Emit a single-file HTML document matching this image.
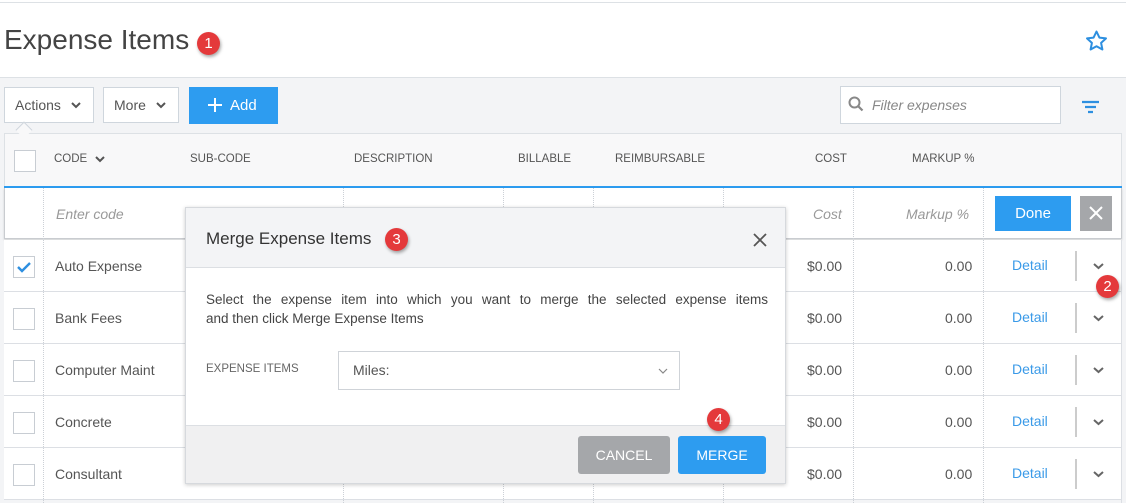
<!DOCTYPE html>
<html><head><style>
*{box-sizing:border-box;margin:0;padding:0}
body{width:1126px;height:503px;overflow:hidden;background:#fff;font-family:"Liberation Sans",sans-serif;color:#555;position:relative}
.a{position:absolute}
.badge{position:absolute;width:23px;height:23px;border-radius:50%;background:#e4393b;color:#fff;font-size:15px;text-align:center;line-height:23px;box-shadow:1px 2px 3px rgba(0,0,0,.35)}
.btn{position:absolute;border:1px solid #cfd6dd;background:#fff;font-size:14px;color:#555;padding-left:10px;line-height:34px}
.th{position:absolute;top:153px;font-size:11.5px;color:#555}
.row{position:absolute;left:4px;width:1118px;height:52px;border-bottom:1px solid #dcdfe4;background:#fff}
.cb{position:absolute;left:9px;width:22px;height:22px;border:1px solid #c8cdd3;background:#fff}
.vd{position:absolute;top:188px;height:315px;border-left:1px dotted #ccd0d6}
.txt{position:absolute;font-size:14px;color:#555}
.det{position:absolute;left:1012px;font-size:14px;color:#3a9ae8}
.chev{position:absolute;left:1093px}
</style></head><body>
<div class="a" style="left:0;top:2px;width:1126px;height:1px;background:#dde1e5"></div>
<div class="a" style="left:4px;top:24px;font-size:28px;color:#444">Expense Items</div>
<div class="badge" style="left:197px;top:32px">1</div>
<svg class="a" style="left:1084px;top:29px" width="25" height="24" viewBox="0 0 24 24"><path d="M12 2.5l2.9 6.1 6.6.8-4.9 4.5 1.3 6.6L12 17.2l-5.9 3.3 1.3-6.6-4.9-4.5 6.6-.8z" fill="none" stroke="#2d8fe0" stroke-width="2" stroke-linejoin="round"/></svg>
<div class="a" style="left:0;top:77px;width:1126px;height:426px;background:#f3f4f6;border-top:1px solid #dde1e5"></div>
<div class="btn" style="left:4px;top:87px;width:90px;height:36px">Actions</div>
<svg class="a" style="left:71px;top:102px" width="10" height="7"><path d="M1 1l4 4 4-4" stroke="#555" stroke-width="2" fill="none"/></svg>
<div class="btn" style="left:103px;top:87px;width:76px;height:36px">More</div>
<svg class="a" style="left:156px;top:102px" width="10" height="7"><path d="M1 1l4 4 4-4" stroke="#555" stroke-width="2" fill="none"/></svg>
<div class="a" style="left:189px;top:87px;width:89px;height:37px;background:#2d9cf0;color:#fff;font-size:15px;line-height:37px;padding-left:41px">Add</div>
<svg class="a" style="left:207px;top:97px" width="16" height="16"><path d="M8 1v14M1 8h14" stroke="#fff" stroke-width="2"/></svg>
<div class="a" style="left:840px;top:86px;width:221px;height:38px;background:#fff;border:1px solid #cfd6dd;font-size:14px;font-style:italic;color:#888;line-height:36px;padding-left:31px">Filter expenses</div>
<svg class="a" style="left:848px;top:96px" width="16" height="16"><circle cx="6.5" cy="6.5" r="5" stroke="#888" stroke-width="2" fill="none"/><path d="M10 10l4.5 4.5" stroke="#888" stroke-width="2.2"/></svg>
<svg class="a" style="left:1082px;top:100px" width="17" height="14"><path d="M0 2h17M3 7h11M6 12h5" stroke="#2d8fe0" stroke-width="2.2"/></svg>
<div class="a" style="left:4px;top:133px;width:1118px;height:54px;background:#f8f8f9;border:1px solid #dde1e5"></div>
<div class="a" style="left:18px;top:124px;width:12px;height:12px;background:#f8f8f9;border-left:1px solid #cfd6dd;border-top:1px solid #cfd6dd;transform:rotate(45deg)"></div>
<div class="cb" style="left:14px;top:150px"></div>
<div class="th" style="left:54px">CODE</div>
<svg class="a" style="left:95px;top:156px" width="10" height="7"><path d="M1 1l4 4 4-4" stroke="#555" stroke-width="2" fill="none"/></svg>
<div class="th" style="left:190px">SUB-CODE</div>
<div class="th" style="left:354px">DESCRIPTION</div>
<div class="th" style="left:518px">BILLABLE</div>
<div class="th" style="left:615px">REIMBURSABLE</div>
<div class="th" style="left:815px">COST</div>
<div class="th" style="left:912px">MARKUP %</div>
<div class="a" style="left:4px;top:186px;width:1118px;height:2px;background:#2d9cf0"></div>
<div class="a" style="left:4px;top:188px;width:1118px;height:51px;background:#fff;border:1px solid #c9ccd0;border-top:none;box-shadow:0 1px 2px rgba(0,0,0,.15)"></div>
<div class="a" style="left:56px;top:206px;font-size:14px;font-style:italic;color:#999">Enter code</div>
<div class="a" style="left:813px;top:206px;font-size:14px;font-style:italic;color:#999">Cost</div>
<div class="a" style="left:906px;top:206px;font-size:14px;font-style:italic;color:#999">Markup %</div>
<div class="a" style="left:995px;top:196px;width:76px;height:35px;background:#2d9cf0;color:#fff;font-size:15px;text-align:center;line-height:35px">Done</div>
<div class="a" style="left:1080px;top:196px;width:32px;height:35px;background:#a5a7aa"></div>
<svg class="a" style="left:1088px;top:205px" width="16" height="16"><path d="M2 2l12 12M14 2L2 14" stroke="#fff" stroke-width="2"/></svg>

<div class="row" style="top:240px"></div>
<div class="row" style="top:292px"></div>
<div class="row" style="top:344px"></div>
<div class="row" style="top:396px"></div>
<div class="row" style="top:448px"></div>
<div class="vd" style="left:43px"></div><div class="vd" style="left:343px"></div><div class="vd" style="left:503px"></div><div class="vd" style="left:593px"></div><div class="vd" style="left:723px"></div><div class="vd" style="left:853px"></div><div class="vd" style="left:983px"></div>
<div class="a" style="left:1121px;top:240px;height:263px;border-left:1px solid #dcdfe4"></div>

<div class="cb" style="left:13px;top:256px"></div>
<svg class="a" style="left:17px;top:261px" width="14" height="12"><path d="M1 6l4 4 8-8" stroke="#2d8fe0" stroke-width="2.4" fill="none"/></svg>
<div class="cb" style="left:13px;top:308px"></div>
<div class="cb" style="left:13px;top:360px"></div>
<div class="cb" style="left:13px;top:412px"></div>
<div class="cb" style="left:13px;top:464px"></div>
<div class="txt" style="left:55px;top:258px">Auto Expense</div>
<div class="txt" style="left:55px;top:310px">Bank Fees</div>
<div class="txt" style="left:55px;top:362px">Computer Maint</div>
<div class="txt" style="left:55px;top:414px">Concrete</div>
<div class="txt" style="left:55px;top:466px">Consultant</div>

<div class="txt" style="left:807px;top:258px">$0.00</div><div class="txt" style="left:945px;top:258px">0.00</div><div class="det" style="top:257px">Detail</div>
<div class="txt" style="left:807px;top:310px">$0.00</div><div class="txt" style="left:945px;top:310px">0.00</div><div class="det" style="top:309px">Detail</div>
<div class="txt" style="left:807px;top:362px">$0.00</div><div class="txt" style="left:945px;top:362px">0.00</div><div class="det" style="top:361px">Detail</div>
<div class="txt" style="left:807px;top:414px">$0.00</div><div class="txt" style="left:945px;top:414px">0.00</div><div class="det" style="top:413px">Detail</div>
<div class="txt" style="left:807px;top:466px">$0.00</div><div class="txt" style="left:945px;top:466px">0.00</div><div class="det" style="top:465px">Detail</div>
<div class="a" style="left:1075px;top:251px;width:2px;height:30px;background:#ccc"></div>
<div class="a" style="left:1075px;top:303px;width:2px;height:30px;background:#ccc"></div>
<div class="a" style="left:1075px;top:355px;width:2px;height:30px;background:#ccc"></div>
<div class="a" style="left:1075px;top:407px;width:2px;height:30px;background:#ccc"></div>
<div class="a" style="left:1075px;top:459px;width:2px;height:30px;background:#ccc"></div>
<svg class="chev" style="top:263px" width="11" height="7"><path d="M1 1l4.5 4 4.5-4" stroke="#666" stroke-width="2" fill="none"/></svg>
<svg class="chev" style="top:315px" width="11" height="7"><path d="M1 1l4.5 4 4.5-4" stroke="#666" stroke-width="2" fill="none"/></svg>
<svg class="chev" style="top:367px" width="11" height="7"><path d="M1 1l4.5 4 4.5-4" stroke="#666" stroke-width="2" fill="none"/></svg>
<svg class="chev" style="top:419px" width="11" height="7"><path d="M1 1l4.5 4 4.5-4" stroke="#666" stroke-width="2" fill="none"/></svg>
<svg class="chev" style="top:471px" width="11" height="7"><path d="M1 1l4.5 4 4.5-4" stroke="#666" stroke-width="2" fill="none"/></svg>
<div class="badge" style="left:1096px;top:275px">2</div>

<div class="a" style="left:185px;top:207px;width:601px;height:277px;background:#fff;border:1px solid #d6d9dd;box-shadow:0 1px 4px rgba(0,0,0,.2)">
 <div class="a" style="left:0;top:0;width:599px;height:60px;background:#f3f4f6;border-bottom:1px solid #dcdfe3"></div>
 <div class="a" style="left:20px;top:21px;font-size:17px;color:#333">Merge Expense Items</div>
 <div class="badge" style="left:199px;top:20px">3</div>
 <svg class="a" style="left:567px;top:25px" width="14" height="14"><path d="M1 1l12 12M13 1L1 13" stroke="#555" stroke-width="1.8"/></svg>
 <div class="a" style="left:20px;top:82px;width:562px;font-size:13.5px;line-height:19px;color:#444;text-align:justify;text-align-last:justify;white-space:nowrap">Select the expense item into which you want to merge the selected expense items</div>
 <div class="a" style="left:20px;top:101px;font-size:13.5px;line-height:19px;color:#444">and then click Merge Expense Items</div>
 <div class="a" style="left:20px;top:155px;font-size:11.5px;color:#666">EXPENSE ITEMS</div>
 <div class="a" style="left:152px;top:143px;width:342px;height:39px;border:1px solid #cfd3d8;font-size:14px;color:#555;line-height:37px;padding-left:14px">Miles:</div>
 <svg class="a" style="left:472px;top:160px" width="10" height="6"><path d="M1 1l4 4 4-4" stroke="#888" stroke-width="1.2" fill="none"/></svg>
 <div class="a" style="left:0;top:217px;width:599px;height:58px;background:#f0f0f1;border-top:1px solid #dcdfe3"></div>
 <div class="a" style="left:392px;top:228px;width:92px;height:38px;background:#a5a7aa;border-radius:3px;color:#fff;font-size:14px;text-align:center;line-height:38px">CANCEL</div>
 <div class="a" style="left:492px;top:228px;width:88px;height:38px;background:#2d9cf0;border-radius:3px;color:#fff;font-size:14px;text-align:center;line-height:38px">MERGE</div>
 <div class="badge" style="left:521px;top:200px">4</div>
</div>
</body></html>
